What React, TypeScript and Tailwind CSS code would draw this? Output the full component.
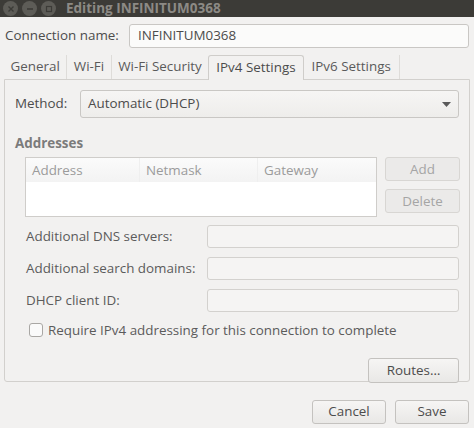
import React from "react";

const font = { fontFamily: '"Open Sans", "DejaVu Sans", sans-serif' };

function WinButton({ kind }: { kind: "close" | "min" | "max" }) {
  return (
    <div className="w-[15px] h-[15px] rounded-full bg-[#5d5c57] flex items-center justify-center">
      <svg width="8" height="8" viewBox="0 0 8 8">
        {kind === "close" && (
          <path d="M1.5 1.5L6.5 6.5M6.5 1.5L1.5 6.5" stroke="#3c3b37" strokeWidth="1.4" />
        )}
        {kind === "min" && <path d="M1 4H7" stroke="#3c3b37" strokeWidth="1.6" />}
        {kind === "max" && <rect x="1.5" y="1.5" width="5" height="5" fill="none" stroke="#3c3b37" strokeWidth="1.2" />}
      </svg>
    </div>
  );
}

function Field({ label }: { label: string }) {
  return (
    <div className="flex items-center h-[23px] pl-[21px] pr-[10px]">
      <span className="w-[181px] text-[#5b5b5b]">{label}</span>
      <div className="flex-1 h-[23px] rounded-[3px] border border-[#d3d1ce] bg-[#f5f4f3]" />
    </div>
  );
}

function Button({ children, disabled, className }: { children: React.ReactNode; disabled?: boolean; className: string }) {
  return (
    <div
      className={`flex items-center justify-center rounded-[3px] border ${
        disabled
          ? "border-[#d8d6d3] bg-[#ebeae9] text-[#a5a5a5]"
          : "border-[#c4c2bf] bg-gradient-to-b from-[#f6f5f4] to-[#e9e8e6] text-[#4c4c4c]"
      } ${className}`}
    >
      {children}
    </div>
  );
}

export default function App() {
  const tabs = ["General", "Wi-Fi", "Wi-Fi Security"];
  return (
    <div className="w-[474px] h-[428px] bg-[#f2f1f0] overflow-hidden text-[13.4px] text-[#4c4c4c] leading-none" style={font}>
      {/* Title bar */}
      <div className="h-[17px] bg-[#3c3b37] flex items-center pl-[3px]">
        <div className="flex gap-[4px]">
          <WinButton kind="close" />
          <WinButton kind="min" />
          <WinButton kind="max" />
        </div>
        <span className="ml-[10px] font-bold text-[#8c8a85] text-[13.5px] leading-[17px]">Editing INFINITUM0368</span>
      </div>

      {/* Connection name */}
      <div className="mt-[7px] flex items-center h-[24px] pl-[5px] pr-[5px]">
        <span className="w-[124px]">Connection name:</span>
        <div className="flex-1 h-[24px] rounded-[3px] border border-[#c9c7c4] bg-[#fbfbfa] flex items-center px-[8px]">
          INFINITUM0368
        </div>
      </div>

      {/* Tabs */}
      <div className="mt-[7px] h-[24px] flex items-stretch pl-[4px] relative z-10">
        {tabs.map((t, i) => (
          <div key={t} className={`flex items-center px-[6.5px] text-[#5a5a5a] ${i < 2 ? "border-r border-[#dedcd9]" : ""}`}>
            {t}
          </div>
        ))}
        <div className="flex items-center px-[7px] border border-b-0 border-[#cfcdca] rounded-t-[3px] bg-[#f2f1f0] h-[25px]">
          IPv4 Settings
        </div>
        <div className="flex items-center px-[8px] text-[#5a5a5a] border-r border-[#dedcd9]">IPv6 Settings</div>
      </div>

      {/* Panel */}
      <div className="mx-[4px] h-[303px] border border-[#d2d0cd] rounded-b-[3px] flex flex-col">
        {/* Method */}
        <div className="mt-[10px] flex items-center h-[28px] pl-[10px] pr-[10px]">
          <span className="w-[65px]">Method:</span>
          <div className="flex-1 h-[28px] rounded-[3px] border border-[#c9c7c4] bg-gradient-to-b from-[#f6f5f4] to-[#eeedeb] flex items-center pl-[7px] pr-[7px]">
            <span className="flex-1">Automatic (DHCP)</span>
            <svg width="9" height="5" viewBox="0 0 9 5">
              <path d="M0 0H9L4.5 5Z" fill="#5a5a5a" />
            </svg>
          </div>
        </div>

        {/* Addresses */}
        <div className="mt-[19px] pl-[10px] font-bold text-[#7b7b7b]">Addresses</div>
        <div className="mt-[7px] flex pl-[20px] pr-[9px] gap-[8px]">
          <div className="w-[352px] h-[60px] border border-[#cfcdca] bg-white flex flex-col">
            <div className="h-[24px] flex bg-gradient-to-b from-[#fbfbfb] to-[#f3f3f3] text-[#9b9b9b]">
              <div className="w-[114px] pl-[6px] flex items-center border-r border-[#efefef]">Address</div>
              <div className="w-[118px] pl-[6px] flex items-center border-r border-[#efefef]">Netmask</div>
              <div className="flex-1 pl-[6px] flex items-center">Gateway</div>
            </div>
          </div>
          <div className="flex flex-col gap-[8px] w-[75px]">
            <Button disabled className="h-[24px]">Add</Button>
            <Button disabled className="h-[24px]">Delete</Button>
          </div>
        </div>

        {/* Extra fields */}
        <div className="mt-[8px] flex flex-col gap-[9px]">
          <Field label="Additional DNS servers:" />
          <Field label="Additional search domains:" />
          <Field label="DHCP client ID:" />
        </div>

        {/* Checkbox */}
        <div className="mt-[11px] flex items-center pl-[24px] h-[14px]">
          <div className="w-[14px] h-[14px] rounded-[3px] border border-[#a9a7a4] bg-[#fafafa]" />
          <span className="ml-[5px] text-[#5b5b5b]">Require IPv4 addressing for this connection to complete</span>
        </div>

        {/* Routes */}
        <div className="mt-[21px] flex justify-end pr-[10px]">
          <Button className="w-[91px] h-[25px]">Routes…</Button>
        </div>
      </div>

      {/* Bottom buttons */}
      <div className="mt-[18px] flex justify-end gap-[9px] pr-[5px]">
        <Button className="w-[74px] h-[24px]">Cancel</Button>
        <Button className="w-[74px] h-[24px]">Save</Button>
      </div>
    </div>
  );
}
